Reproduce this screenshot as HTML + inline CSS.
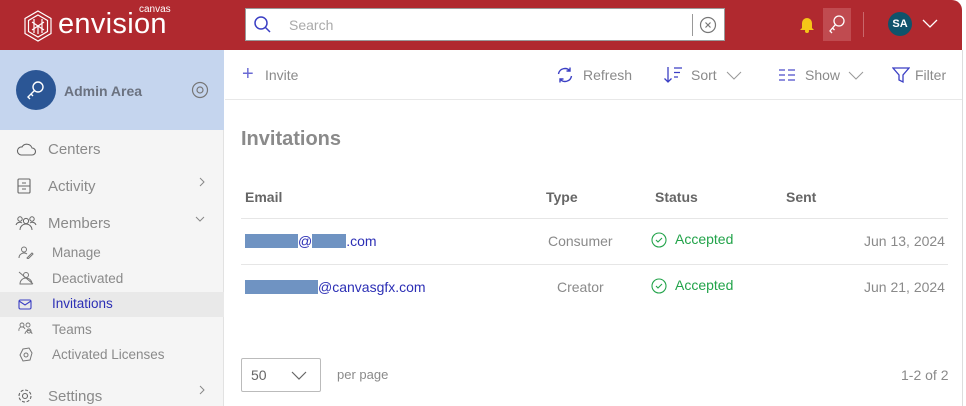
<!DOCTYPE html>
<html><head><meta charset="utf-8"><style>
*{box-sizing:border-box;margin:0;padding:0}
body{width:966px;height:406px;overflow:hidden;font-family:"Liberation Sans",sans-serif;background:#fff;position:relative}
.hdr{position:absolute;left:0;top:0;width:962px;height:50px;background:#b0292f;border-top-right-radius:10px}
.abs{position:absolute}
.side{position:absolute;left:0;top:50px;width:224px;height:356px;background:#f5f5f5;border-right:1px solid #e2e2e2}
.admin{position:absolute;left:0;top:50px;width:224px;height:80px;background:#c5d5ee}
.nav{position:absolute;color:#8a8a8a;font-size:15px}
.sub{position:absolute;color:#8a8a8a;font-size:13.5px}
.gray{color:#8a8a8a}
.th{position:absolute;top:189px;font-size:14px;font-weight:bold;color:#666}
.td{position:absolute;font-size:14px;color:#8a8a8a}
.line{position:absolute;left:241px;width:707px;height:1px;background:#e6e6e6}
.blur{display:inline-block;background:#6f93c2;height:14px;vertical-align:-2px}
</style></head><body>
<div class="hdr"></div>
<svg class="abs" style="left:23px;top:10px" width="30" height="32" viewBox="0 0 30 32" fill="none" stroke="#fff" stroke-width="1.2"><path d="M15 1 L28 8.5 V23.5 L15 31 L2 23.5 V8.5Z"/><path d="M15 5 L24.5 10.5 V21.5 L15 27 L5.5 21.5 V10.5Z"/><path d="M9 12 L15 16 L21 12 M15 16 V24 M9 20 L15 16 L21 20 M11 9 V23 M19 9 V23"/></svg>
<div class="abs" style="left:58px;top:8px;color:#fff;font-size:29px;letter-spacing:0.3px;line-height:32px">envision</div>
<div class="abs" style="left:139px;top:5px;color:#fff;font-size:10px;line-height:10px">canvas</div>
<div class="abs" style="left:245px;top:8px;width:480px;height:33px;background:#fff;border:1px solid #9a9a9a"></div>
<svg class="abs" style="left:253px;top:15px" width="20" height="20" viewBox="0 0 20 20" fill="none" stroke="#3b3fc4" stroke-width="1.5"><circle cx="8" cy="8" r="6"/><path d="M12.5 12.5 L17 17"/></svg>
<div class="abs" style="left:289px;top:17px;font-size:14px;color:#aaa">Search</div>
<div class="abs" style="left:692px;top:14px;width:1px;height:22px;background:#999"></div>
<svg class="abs" style="left:699px;top:16px" width="18" height="18" viewBox="0 0 18 18" fill="none" stroke="#777" stroke-width="1.2"><circle cx="9" cy="9" r="7.5"/><path d="M6.5 6.5 L11.5 11.5 M11.5 6.5 L6.5 11.5"/></svg>
<svg class="abs" style="left:799px;top:15px" width="16" height="18" viewBox="0 0 16 18"><path d="M3 13 V8 A5 5 0 0 1 13 8 V13 L15 15 H1Z" fill="#f5c518"/><circle cx="8" cy="16" r="2" fill="#f5c518"/></svg>
<div class="abs" style="left:823px;top:8px;width:28px;height:33px;background:#c04b50"></div>
<svg class="abs" style="left:828px;top:14px" width="18" height="20" viewBox="0 0 18 20" fill="none" stroke="#fff" stroke-width="1.3"><circle cx="11" cy="7" r="5"/><path d="M7.5 10.5 L2 17 L4 19 M4.5 14 L6.5 16"/></svg>
<div class="abs" style="left:863px;top:12px;width:1px;height:25px;background:#c9676b"></div>
<div class="abs" style="left:888px;top:12px;width:24px;height:24px;border-radius:50%;background:#10536b;color:#fff;font-size:11px;font-weight:bold;text-align:center;line-height:24px">SA</div>
<svg class="abs" style="left:922px;top:19px" width="16" height="10" viewBox="0 0 16 10" fill="none" stroke="#fff" stroke-width="1.3"><path d="M1 1 L8 8 L15 1"/></svg>
<div class="side"></div>
<div class="admin"></div>
<div class="abs" style="left:16px;top:70px;width:40px;height:40px;border-radius:50%;background:#2b5695"></div>
<svg class="abs" style="left:26px;top:80px" width="20" height="20" viewBox="0 0 20 20" fill="none" stroke="#fff" stroke-width="1.4"><circle cx="12" cy="7" r="5"/><path d="M8.5 10.5 L2 17 L4 19 M5 14 L7 16"/></svg>
<div class="abs" style="left:64px;top:83px;font-size:14px;font-weight:bold;color:#6b7280">Admin Area</div>
<svg class="abs" style="left:191px;top:81px" width="18" height="18" viewBox="0 0 18 18" fill="none" stroke="#777" stroke-width="1.2"><circle cx="9" cy="9" r="7.5"/><circle cx="9" cy="9" r="3"/></svg>
<svg class="abs" style="left:16px;top:142px" width="20" height="14" viewBox="0 0 20 14" fill="none" stroke="#666" stroke-width="1.1"><path d="M5 13 H16 A3.5 3.5 0 0 0 16 6 A5.5 5.5 0 0 0 6 5 A4 4 0 0 0 5 13Z"/></svg>
<div class="nav" style="left:48px;top:141px">Centers</div>
<svg class="abs" style="left:17px;top:178px" width="14" height="16" viewBox="0 0 14 16" fill="none" stroke="#666" stroke-width="1.1"><rect x="1" y="1" width="12" height="14" rx="1"/><path d="M1 8 H13 M5 5 H9 M5 11 H9"/></svg>
<div class="nav" style="left:48px;top:178px">Activity</div>
<svg class="abs" style="left:199px;top:177px" width="6" height="10" viewBox="0 0 6 10" fill="none" stroke="#888"><path d="M1 1 L5 5 L1 9"/></svg>
<svg class="abs" style="left:15px;top:215px" width="22" height="16" viewBox="0 0 22 16" fill="none" stroke="#666" stroke-width="1"><circle cx="5" cy="4" r="2.2"/><circle cx="17" cy="4" r="2.2"/><circle cx="11" cy="6" r="2.6"/><path d="M5 15 A6 6 0 0 1 17 15 M1 10 A4 4 0 0 1 7 8 M21 10 A4 4 0 0 0 15 8"/></svg>
<div class="nav" style="left:48px;top:215px">Members</div>
<svg class="abs" style="left:195px;top:216px" width="10" height="6" viewBox="0 0 10 6" fill="none" stroke="#888"><path d="M1 1 L5 5 L9 1"/></svg>
<svg class="abs" style="left:18px;top:246px" width="16" height="13" viewBox="0 0 16 13" fill="none" stroke="#777"><circle cx="6" cy="3.5" r="2.5"/><path d="M1 12 A5 5 0 0 1 9 8 M9 12 L14 7 L15 8 L10 13Z"/></svg>
<div class="sub" style="left:52px;top:245px">Manage</div>
<svg class="abs" style="left:18px;top:271px" width="16" height="14" viewBox="0 0 16 14" fill="none" stroke="#777"><circle cx="8" cy="4" r="2.5"/><path d="M2 13 A6 6 0 0 1 14 13 Z M1 1 L15 13"/></svg>
<div class="sub" style="left:52px;top:271px">Deactivated</div>
<div class="abs" style="left:0;top:292px;width:224px;height:25px;background:#e9e9e9"></div>
<svg class="abs" style="left:18px;top:299px" width="14" height="11" viewBox="0 0 14 11" fill="none" stroke="#3b3fc4" stroke-width="1.1"><rect x="1" y="1" width="12" height="9" rx="1.5"/><path d="M1 2 L7 6 L13 2"/></svg>
<div class="sub" style="left:52px;top:296px;color:#2c2fb5">Invitations</div>
<svg class="abs" style="left:18px;top:322px" width="16" height="14" viewBox="0 0 16 14" fill="none" stroke="#777" stroke-width=".9"><circle cx="4" cy="3" r="2"/><circle cx="10" cy="3" r="2"/><path d="M1 9 A3 3 0 0 1 7 7 M7 12 A3 3 0 0 1 14 12"/><circle cx="11" cy="9" r="2"/></svg>
<div class="sub" style="left:52px;top:322px">Teams</div>
<svg class="abs" style="left:19px;top:347px" width="14" height="15" viewBox="0 0 14 15" fill="none" stroke="#777"><path d="M4 2 L10 1 L13 6 L11 13 L4 14 L1 8Z"/><circle cx="7" cy="8" r="2"/></svg>
<div class="sub" style="left:52px;top:347px">Activated Licenses</div>
<svg class="abs" style="left:17px;top:388px" width="16" height="16" viewBox="0 0 16 16" fill="none" stroke="#666" stroke-width="1.1"><circle cx="8" cy="8" r="2.5"/><circle cx="8" cy="8" r="6" stroke-dasharray="3 1.7"/></svg>
<div class="nav" style="left:48px;top:388px">Settings</div>
<svg class="abs" style="left:199px;top:385px" width="6" height="10" viewBox="0 0 6 10" fill="none" stroke="#888"><path d="M1 1 L5 5 L1 9"/></svg>
<div class="abs" style="left:225px;top:99px;width:737px;height:1px;background:#e8e8e8"></div>
<div class="abs" style="left:962px;top:50px;width:1px;height:356px;background:#ddd"></div>
<div class="abs" style="left:242px;top:64px;font-size:20px;color:#6a6ad4;line-height:20px">+</div>
<div class="abs gray" style="left:265px;top:67px;font-size:14px">Invite</div>
<svg class="abs" style="left:556px;top:66px" width="18" height="18" viewBox="0 0 18 18" fill="none" stroke="#3b3fc4" stroke-width="1.4"><path d="M2.5 8 A6.5 6.5 0 0 1 14 5 M15.5 10 A6.5 6.5 0 0 1 4 13 M14 1.5 V5 H10.5 M4 16.5 V13 H7.5"/></svg>
<div class="abs gray" style="left:583px;top:67px;font-size:14px">Refresh</div>
<svg class="abs" style="left:663px;top:66px" width="20" height="18" viewBox="0 0 20 18" fill="none" stroke="#3b3fc4" stroke-width="1.3"><path d="M5 1 V16 M1.5 12.5 L5 16 L8.5 12.5 M11 2 H19 M11 6.5 H17 M11 11 H15"/></svg>
<div class="abs gray" style="left:691px;top:67px;font-size:14px">Sort</div>
<svg class="abs" style="left:726px;top:71px" width="16" height="9" viewBox="0 0 16 9" fill="none" stroke="#999"><path d="M1 1 L8 8 L15 1"/></svg>
<svg class="abs" style="left:778px;top:68px" width="18" height="15" viewBox="0 0 18 15" fill="none" stroke="#6a6ad4" stroke-width="1.6"><path d="M1 2 H7 M1 7 H7 M1 12 H7 M10 2 H17 M10 7 H17 M10 12 H17"/></svg>
<div class="abs gray" style="left:805px;top:67px;font-size:14px">Show</div>
<svg class="abs" style="left:848px;top:71px" width="16" height="9" viewBox="0 0 16 9" fill="none" stroke="#999"><path d="M1 1 L8 8 L15 1"/></svg>
<svg class="abs" style="left:892px;top:66px" width="18" height="18" viewBox="0 0 18 18" fill="none" stroke="#3b3fc4" stroke-width="1.3"><path d="M1 2 H17 L11 9 V16 L7 14 V9Z"/></svg>
<div class="abs gray" style="left:915px;top:67px;font-size:14px">Filter</div>
<div class="abs" style="left:241px;top:128px;font-size:20px;font-weight:bold;color:#8a8a8a">Invitations</div>
<div class="th" style="left:245px">Email</div>
<div class="th" style="left:546px">Type</div>
<div class="th" style="left:655px">Status</div>
<div class="th" style="left:786px">Sent</div>
<div class="line" style="top:218px"></div>
<div class="line" style="top:264px"></div>
<div class="td" style="left:245px;top:233px;color:#2c2fb5"><span class="blur" style="width:53px"></span>@<span class="blur" style="width:34px"></span>.com</div>
<div class="td" style="left:548px;top:233px">Consumer</div>
<svg class="abs" style="left:651px;top:232px" width="16" height="16" viewBox="0 0 16 16" fill="none" stroke="#22a34a" stroke-width="1.1"><circle cx="8" cy="8" r="7"/><path d="M5 8 L7 10 L11 6"/></svg>
<div class="td" style="left:675px;top:231px;color:#22a34a">Accepted</div>
<div class="td" style="left:864px;top:233px">Jun 13, 2024</div>
<div class="td" style="left:245px;top:279px;color:#2c2fb5"><span class="blur" style="width:73px"></span>@canvasgfx.com</div>
<div class="td" style="left:557px;top:279px">Creator</div>
<svg class="abs" style="left:651px;top:278px" width="16" height="16" viewBox="0 0 16 16" fill="none" stroke="#22a34a" stroke-width="1.1"><circle cx="8" cy="8" r="7"/><path d="M5 8 L7 10 L11 6"/></svg>
<div class="td" style="left:675px;top:277px;color:#22a34a">Accepted</div>
<div class="td" style="left:864px;top:279px">Jun 21, 2024</div>
<div class="abs" style="left:241px;top:358px;width:80px;height:34px;border:1px solid #bbb;border-radius:2px"></div>
<div class="abs" style="left:251px;top:367px;font-size:14px;color:#666">50</div>
<svg class="abs" style="left:291px;top:371px" width="16" height="9" viewBox="0 0 16 9" fill="none" stroke="#666" stroke-width="1.2"><path d="M1 1 L8 8 L15 1"/></svg>
<div class="abs gray" style="left:337px;top:367px;font-size:13px">per page</div>
<div class="abs gray" style="left:901px;top:367px;font-size:14px">1-2 of 2</div>
</body></html>
